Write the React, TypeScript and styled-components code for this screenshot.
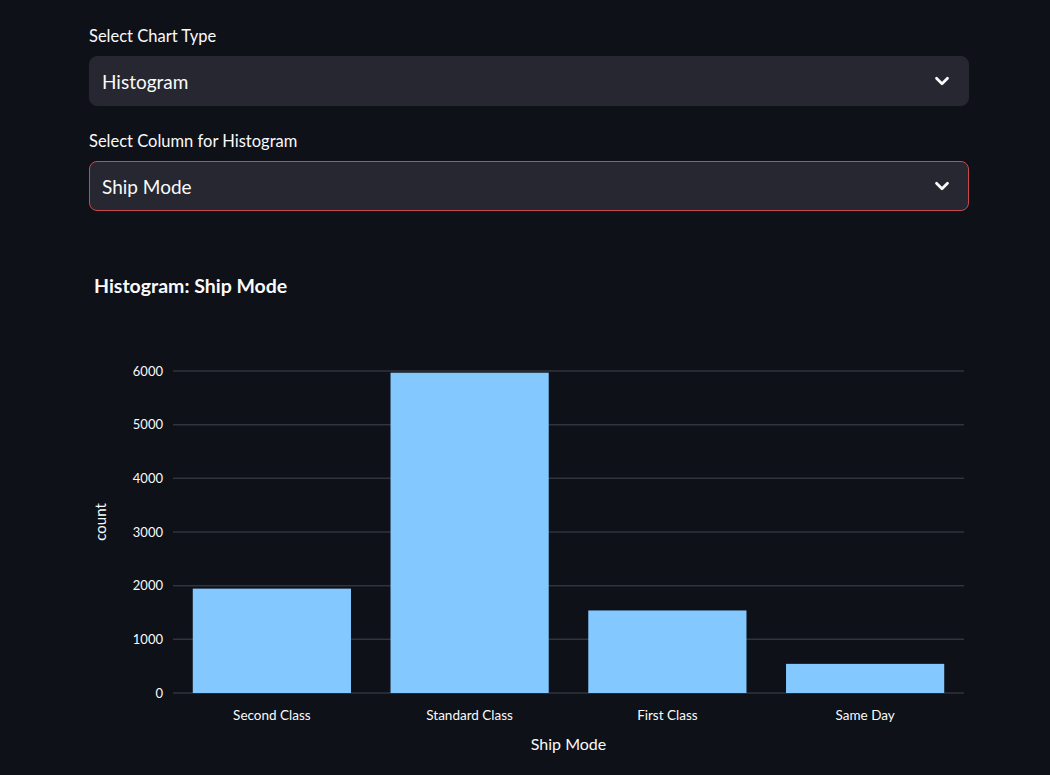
import styled, { createGlobalStyle } from "styled-components";
import { ChevronDown } from "lucide-react";

const GlobalStyle = createGlobalStyle`
    body {
        margin: 0;
        background-color: #0E1117;
        color: #FAFAFA;
        font-family: "Source Sans Pro", Lato, "Noto Sans", sans-serif;
    }
`;

const Page = styled.div`
    width: 880px;
    padding: 26px 0 0 89px;
    height: 749px;
    overflow: hidden;
`;

const Field = styled.div`
    display: flex;
    flex-direction: column;
    gap: 10px;
    margin-bottom: 25px;
`;

const Label = styled.label`
    font-size: 16.5px;
    line-height: 20px;
`;

const SelectBox = styled.div<{ $focused?: boolean }>`
    display: flex;
    align-items: center;
    justify-content: space-between;
    height: 50px;
    box-sizing: border-box;
    padding: 0 15px 0 12px;
    background-color: #262730;
    border-radius: 8px;
    border: 1px solid ${(p) => (p.$focused ? "#C84A4D" : "#262730")};
    font-size: 19px;
`;

const ChartTitle = styled.h3`
    margin: 65px 0 0 5px;
    font-size: 19.5px;
    line-height: 20px;
    font-weight: 700;
`;

const data = [
    { name: "Second Class", value: 1945 },
    { name: "Standard Class", value: 5968 },
    { name: "First Class", value: 1538 },
    { name: "Same Day", value: 543 },
];

const ticks = [0, 1000, 2000, 3000, 4000, 5000, 6000];

function Chart() {
    const left = 84;
    const right = 875;
    const y0 = 383;
    const perUnit = 322 / 6000;
    const band = (right - left) / data.length;
    const barW = band * 0.8;
    return (
        <svg width={880} height={450} style={{ display: "block", marginTop: 14 }}>
            {ticks.map((t) => (
                <g key={t}>
                    <line x1={left} x2={right} y1={y0 - t * perUnit} y2={y0 - t * perUnit} stroke="#31333F" strokeWidth={1.5} />
                    <text x={74} y={y0 - t * perUnit + 4.5} textAnchor="end" fill="#FAFAFA" fontSize={13}>
                        {t}
                    </text>
                </g>
            ))}
            {data.map((d, i) => {
                const x = left + band * i + (band - barW) / 2;
                const h = d.value * perUnit;
                return (
                    <g key={d.name}>
                        <rect x={x} y={y0 - h} width={barW} height={h} fill="#83C9FF" />
                        <text x={x + barW / 2} y={410} textAnchor="middle" fill="#FAFAFA" fontSize={13.5}>
                            {d.name}
                        </text>
                    </g>
                );
            })}
            <text x={(left + right) / 2} y={440} textAnchor="middle" fill="#FAFAFA" fontSize={16}>
                Ship Mode
            </text>
            <text x={17} y={212} textAnchor="middle" fill="#FAFAFA" fontSize={15} transform="rotate(-90 17 212)">
                count
            </text>
        </svg>
    );
}

export default function App() {
    return (
        <>
            <GlobalStyle />
            <Page>
                <Field>
                    <Label>Select Chart Type</Label>
                    <SelectBox>
                        Histogram
                        <ChevronDown size={22} strokeWidth={3} />
                    </SelectBox>
                </Field>
                <Field>
                    <Label>Select Column for Histogram</Label>
                    <SelectBox $focused>
                        Ship Mode
                        <ChevronDown size={22} strokeWidth={3} />
                    </SelectBox>
                </Field>
                <ChartTitle>Histogram: Ship Mode</ChartTitle>
                <Chart />
            </Page>
        </>
    );
}
